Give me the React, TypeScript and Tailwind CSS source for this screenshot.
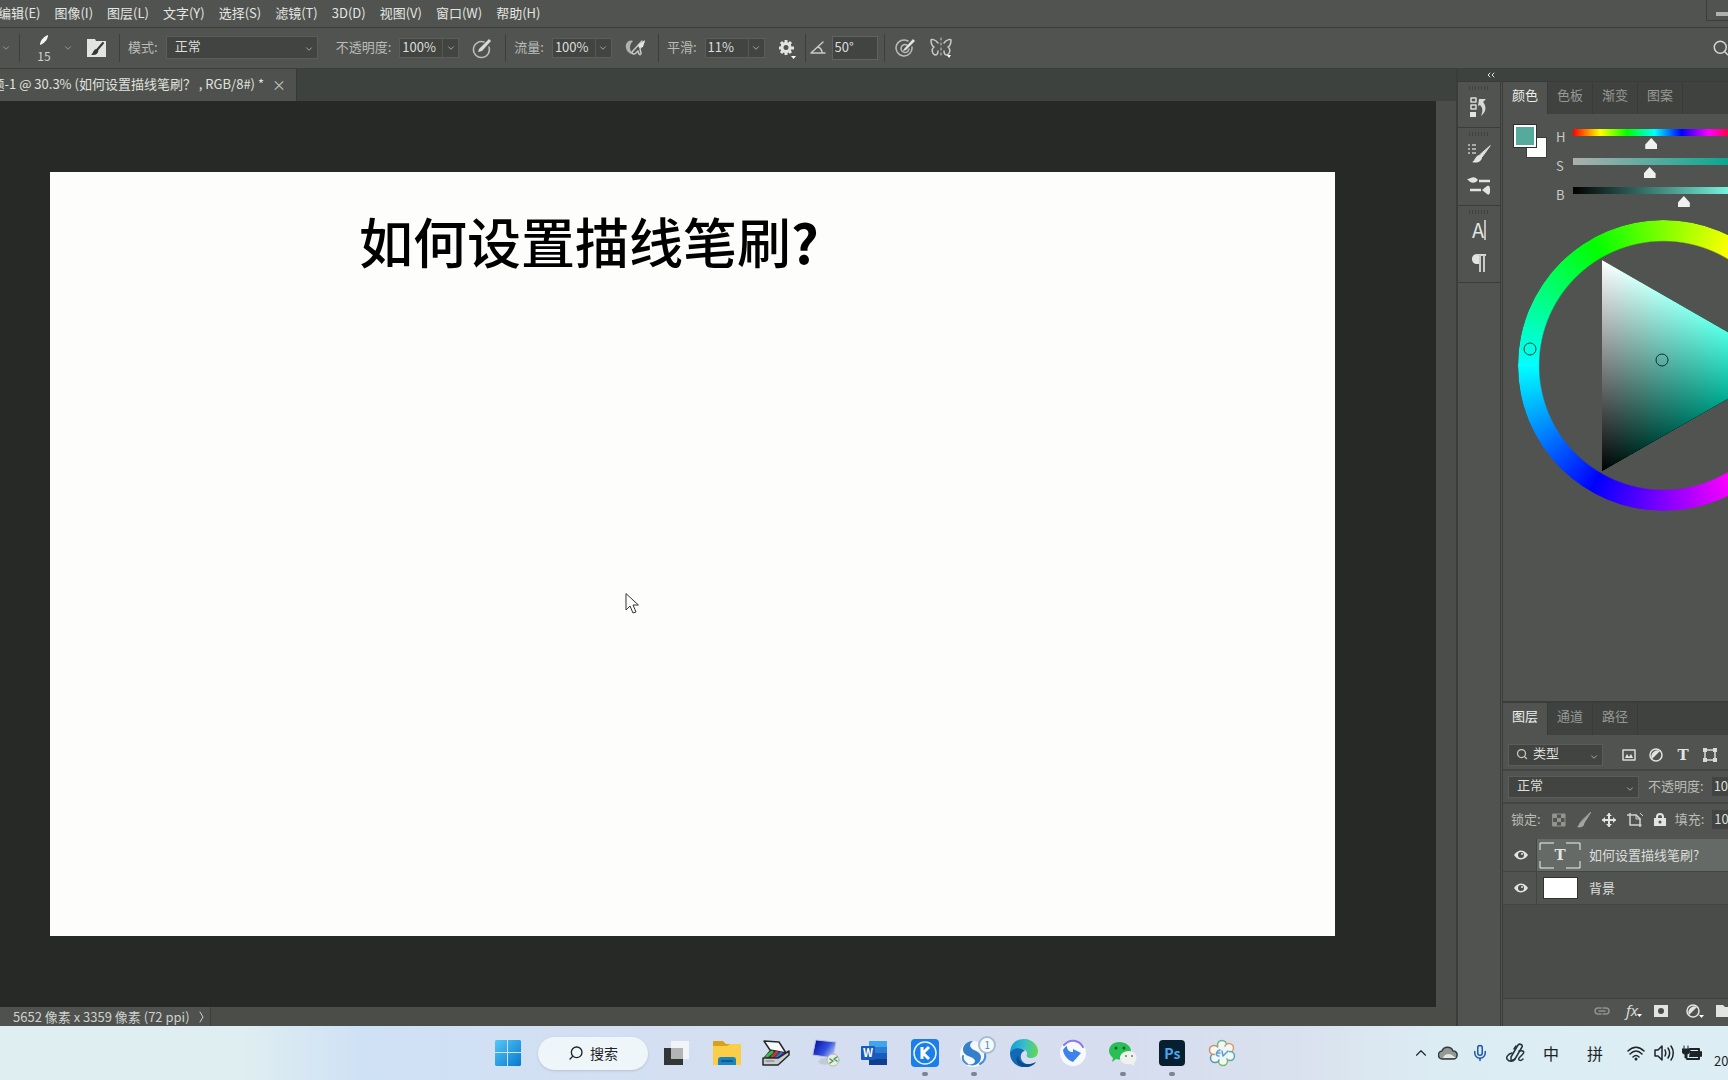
import type { ReactNode } from 'react';
import { ChevronDown, ChevronUp, Mic, Search } from 'lucide-react';

const MENUS = ['编辑(E)', '图像(I)', '图层(L)', '文字(Y)', '选择(S)', '滤镜(T)', '3D(D)', '视图(V)', '窗口(W)', '帮助(H)'];
const COLOR_TABS = ['颜色', '色板', '渐变', '图案'];
const LAYER_TABS = ['图层', '通道', '路径'];

type IconProps = {
  width: number;
  height: number;
  className?: string;
  children: ReactNode;
};

function Icon({ width, height, className = '', children }: IconProps) {
  return (
    <svg
      aria-hidden="true"
      width={width}
      height={height}
      viewBox={`0 0 ${width} ${height}`}
      className={`shrink-0 ${className}`}
      fill="none"
      strokeLinecap="round"
      strokeLinejoin="round"
    >
      {children}
    </svg>
  );
}

function Divider() {
  return <span className="h-7 w-px shrink-0 bg-[#3b3e3b]" />;
}

function Dropdown({ label, options, className }: { label: string; options: string[]; className: string }) {
  return (
    <div className={`relative shrink-0 ${className}`}>
      <select
        aria-label={label}
        className="block h-full w-full appearance-none border border-[#5a5d59] bg-[#414441] pb-1 pl-2 text-[13px] leading-4 text-[#dcdedb] outline-none"
      >
        {options.map((option) => (
          <option key={option}>{option}</option>
        ))}
      </select>
      <ChevronDown className="pointer-events-none absolute top-2 right-1 size-2.5 text-[#b4b7b3]" />
    </div>
  );
}

function ValueBox({ id, label, value, className }: { id: string; label: string; value: string; className: string }) {
  return (
    <div className="flex shrink-0 items-center gap-2">
      <label htmlFor={id} className="pb-0.5 text-[13px] leading-5 text-[#b9bcb8]">
        {label}
      </label>
      <div className={`flex h-5 border border-[#5a5d59] bg-[#414441] ${className}`}>
        <input id={id} defaultValue={value} className="w-0 min-w-0 flex-1 bg-transparent pb-0.5 pl-0.5 text-[13px] text-[#dcdedb] outline-none" />
        <button type="button" aria-label={`${label} slider`} className="flex w-4 items-center justify-center border-l border-[#555854]">
          <ChevronDown className="size-2.5 text-[#b4b7b3]" />
        </button>
      </div>
    </div>
  );
}

function IconButton({ label, className = '', children }: { label: string; className?: string; children: ReactNode }) {
  return (
    <button type="button" aria-label={label} title={label} className={`flex shrink-0 items-center justify-center ${className}`}>
      {children}
    </button>
  );
}

function OptionsBar() {
  return (
    <div className="flex h-[41px] shrink-0 items-center overflow-hidden border-b border-[#3b3e3b] bg-[#50534f] pb-px">
      <IconButton label="工具预设" className="w-[19px] pr-2">
        <ChevronDown className="size-2.5 text-[#a4a7a3]" />
      </IconButton>
      <Divider />
      <button type="button" className="ml-3 flex w-6 flex-col items-center text-[12px] leading-3 text-[#cfd1ce]">
        <Icon width={10} height={12}>
          <path d="M1 11C1 7 4 3 9 1 9 5 6 9 1 11Z" fill="#f5f6f4" />
        </Icon>
        <span className="mt-1">15</span>
      </button>
      <IconButton label="画笔预设" className="ml-1 w-4">
        <ChevronDown className="size-2.5 text-[#a4a7a3]" />
      </IconButton>
      <IconButton label="画笔设置" className="mr-3 ml-[11px]">
        <Icon width={20} height={20}>
          <path d="M0 1h8l1 2h10v16H0Z" fill="#e2e4e1" />
          <path d="M16 5 10 12" stroke="#333633" strokeWidth="2" />
          <path d="M9 11c2 0 3 2 2 3-1 3-4 3-7 3 2-1 2-5 5-6Z" fill="#333633" />
        </Icon>
      </IconButton>
      <Divider />
      <span className="ml-2 shrink-0 pb-0.5 text-[13px] leading-5 text-[#b9bcb8]">模式:</span>
      <Dropdown label="模式" options={['正常', '溶解', '正片叠底']} className="mr-[18px] ml-2 h-[23px] w-[152px]" />
      <ValueBox id="opacity" label="不透明度:" value="100%" className="w-[60px]" />
      <IconButton label="不透明度压力" className="mx-3">
        <Icon width={22} height={22}>
          <path d="M13 5A8 8 0 1 0 18 10" stroke="#b9bcb8" strokeWidth="1.5" />
          <path d="m8 12 10-10 2 2L11 14l-4 1Z" fill="#d8dad7" />
        </Icon>
      </IconButton>
      <Divider />
      <span className="w-2" />
      <ValueBox id="flow" label="流量:" value="100%" className="w-[60px]" />
      <IconButton label="喷枪" className="mx-3">
        <Icon width={22} height={22}>
          <path d="M9 4C4 2 1 7 2 11c1 4 4 6 7 6-4-4-4-9 0-13Z" fill="#aeb1ad" />
          <path d="M18 4 8 15c0 2 2 3 4 1l2-2 1 3c1 1 2 1 2-1l-1-4 4-7" stroke="#c8cac7" strokeWidth="1.5" />
          <path d="m21 3-7 5 1 3 4-1Z" fill="#e2e4e1" />
        </Icon>
      </IconButton>
      <Divider />
      <span className="w-2" />
      <ValueBox id="smooth" label="平滑:" value="11%" className="w-[60px]" />
      <IconButton label="平滑选项" className="mr-2 ml-3">
        <Icon width={20} height={22}>
          <g stroke="#e2e4e1" strokeWidth="3" strokeLinecap="butt">
            <path d="M9 3v15M2 11h15M4 5l10 11M14 5 4 16" />
          </g>
          <circle cx="9" cy="10.5" r="4" fill="#50534f" stroke="#e2e4e1" strokeWidth="3" />
          <path d="M14 19h5l-2.5 3Z" fill="#fff" />
        </Icon>
      </IconButton>
      <Divider />
      <div className="mr-1.5 ml-1 flex shrink-0 items-center gap-1.5">
        <label htmlFor="angle" aria-label="角度">
          <Icon width={16} height={14}>
            <path d="M13 1 1 12h14M8 6c3 1 4 3 4 6" stroke="#c8cac7" strokeWidth="1.5" />
          </Icon>
        </label>
        <input id="angle" defaultValue="50°" className="h-6 w-[46px] border border-[#5f625e] bg-[#414441] pb-0.5 pl-0.5 text-[13px] text-[#dcdedb] outline-none" />
      </div>
      <Divider />
      <IconButton label="大小压力" className="ml-2.5">
        <Icon width={22} height={22}>
          <path d="M13 4A8 8 0 1 0 17 10M12 8a4 4 0 1 0 2 4" stroke="#b9bcb8" strokeWidth="1.5" />
          <path d="m9 12 9-10 2 2-9 9-3 1Z" fill="#e2e4e1" />
        </Icon>
      </IconButton>
      <IconButton label="对称" className="ml-3">
        <Icon width={24} height={22}>
          <path
            d="M9 6C6 2 2 2 2 3c0 4 1 6 3 7-3 2-2 7 1 8 2 0 3-2 3-4M15 6c3-4 7-4 7-3 0 4-1 6-3 7 3 2 2 7-1 8-2 0-3-2-3-4"
            stroke="#c8cac7"
            strokeWidth="1.5"
          />
          <path d="M12 1v20" stroke="#c8cac7" strokeDasharray="2 3" />
          <path d="M18 18h4l-2 3Z" fill="#fff" />
        </Icon>
      </IconButton>
      <IconButton label="搜索" className="-mr-0.5 ml-auto">
        <Search className="size-[18px] text-[#d3d5d2]" />
      </IconButton>
    </div>
  );
}

function Document() {
  return (
    <section className="flex min-w-0 flex-1 flex-col">
      <div className="flex h-8 shrink-0 bg-[#3e423f]">
        <div className="flex w-[297px] items-center justify-end overflow-hidden border-r border-[#353835] bg-[#4e514d] pr-2.5 pb-0.5 text-[13px] whitespace-pre text-[#e0e2df]">
          <span>未标题-1 @ 30.3% (如何设置描线笔刷？ , RGB/8#) *</span>
          <button type="button" aria-label="关闭文档" className="ml-2 text-[14px] leading-4 text-[#c0c3bf]">
            ×
          </button>
        </div>
      </div>
      <div className="flex min-h-0 flex-1">
        <div className="min-w-0 flex-1 bg-[#272926] pt-[71px] pr-[101px] pb-[71px] pl-[50px]">
          <div className="relative h-full bg-[#fdfefc] pt-[30px] pl-[309px]">
            <h1 className="text-[54px] leading-[78px] font-medium whitespace-nowrap text-black">
              如何设置描线笔刷<span className="font-bold">?</span>
            </h1>
            <Icon width={14} height={22} className="absolute top-[421px] left-[575px]">
              <path d="M1 1v16l4-4 3 7 3-1-3-7h5Z" fill="#fff" stroke="#333" />
            </Icon>
          </div>
        </div>
        <div className="w-5 bg-[#4a4d4a]" />
      </div>
      <footer className="flex h-[19px] shrink-0 bg-[#4b4d49]">
        <div className="flex w-[211px] items-center justify-between border-r border-[#3b3e3b] bg-[#4e514d] pr-1.5 pl-[13px] text-[13px] leading-4 whitespace-nowrap text-[#cfd1ce]">
          <span>5652 像素 x 3359 像素 (72 ppi)</span>
          <Icon width={5} height={12}>
            <path d="m1 1 3 5-3 5" stroke="#cfd1ce" />
          </Icon>
        </div>
      </footer>
    </section>
  );
}

function Grip() {
  return <span className="mt-1 h-1 w-5 bg-[repeating-linear-gradient(90deg,#3f423f_0_1px,transparent_1px_3px)]" />;
}

function CollapsedDock() {
  return (
    <nav aria-label="折叠面板" className="flex w-[43px] shrink-0 flex-col border-r border-[#3a3d3a] bg-[#50534f]">
      <div className="flex h-[46px] flex-col items-center border-b border-[#3a3d3a]">
        <Grip />
        <IconButton label="历史记录" className="mt-1.5">
          <Icon width={20} height={22}>
            <path d="M2 2h5v4H2Zm0 7h5v4H2Z" stroke="#d8dad7" strokeWidth="1.5" />
            <path d="M1 16h6v5H1Z" fill="#e2e4e1" />
            <path d="M10 3h7l-3 3c4 5 3 10-2 14 2-5 2-8-1-11l-2 1Z" fill="#d8dad7" />
          </Icon>
        </IconButton>
      </div>
      <div className="flex h-[78px] flex-col items-center border-b border-[#3a3d3a]">
        <Grip />
        <IconButton label="画笔设置" className="mt-1.5">
          <Icon width={24} height={22}>
            <path d="M1 3h2M1 7h2M1 11h2M5 3h4M5 7h4M5 11h4" stroke="#c8cac7" strokeWidth="1.5" strokeLinecap="butt" />
            <path d="M23 4 15 15l-2-2Z" fill="#e2e4e1" stroke="#e2e4e1" />
            <path d="M12 13c3 0 4 3 2 5-2 3-6 3-9 2 3-1 3-6 7-7Z" fill="#e2e4e1" />
          </Icon>
        </IconButton>
        <IconButton label="画笔" className="mt-3">
          <Icon width={24} height={20}>
            <path d="M0 3c4 0 5-3 9-1l2 2-2 2C5 8 3 6 0 3Z" fill="#e2e4e1" />
            <path d="M12 5h11M3 14h11" stroke="#e2e4e1" strokeWidth="2.5" strokeLinecap="butt" />
            <path d="m15 14 5-4c3-1 3 2 3 4s0 6-3 4Z" fill="#e2e4e1" />
          </Icon>
        </IconButton>
      </div>
      <div className="flex h-[77px] flex-col items-center border-b border-[#3a3d3a] text-[#e2e4e1]">
        <Grip />
        <button type="button" aria-label="字符" className="mt-1.5 flex h-5 items-center border-r-2 border-[#b9bcb8] text-[20px] leading-5">
          A
        </button>
        <IconButton label="段落" className="mt-3.5">
          <Icon width={14} height={18}>
            <path d="M7 0H5C2 0 0 2 0 5s2 5 5 5h2Z" fill="#e2e4e1" />
            <path d="M5 1h9" stroke="#d8dad7" strokeWidth="2" strokeLinecap="butt" />
            <path d="M8 1v17M12 1v17" stroke="#c8cac7" strokeWidth="2" strokeLinecap="butt" />
          </Icon>
        </IconButton>
      </div>
    </nav>
  );
}

function Tabs({ items, label }: { items: string[]; label: string }) {
  return (
    <div role="tablist" aria-label={label} className="flex h-8 shrink-0 bg-[#3f423f]">
      {items.map((item, index) => (
        <button
          key={item}
          type="button"
          role="tab"
          aria-selected={index === 0}
          className={`w-[45px] border-r border-[#383b38] pb-1.5 text-[13px] ${index === 0 ? 'bg-[#50534f] text-[#eceeeb]' : 'text-[#969995]'}`}
        >
          {item}
        </button>
      ))}
    </div>
  );
}

function ColorSlider({ label, value, track }: { label: string; value: number; track: string }) {
  return (
    <div className="flex h-[29px] items-start">
      <label htmlFor={`slider-${label}`} className="w-[17px] shrink-0 text-[13px] leading-4 text-[#c8cac7]">
        {label}
      </label>
      <div className="w-[163px] shrink-0">
        <div className={`h-[7px] ${track}`} />
        <input
          id={`slider-${label}`}
          type="range"
          defaultValue={value}
          className="mt-0.5 -ml-1.5 block h-[11px] w-[175px] appearance-none bg-transparent [&::-webkit-slider-thumb]:h-[11px] [&::-webkit-slider-thumb]:w-3 [&::-webkit-slider-thumb]:appearance-none [&::-webkit-slider-thumb]:bg-[#f0f1ef] [&::-webkit-slider-thumb]:[clip-path:polygon(50%_0,100%_60%,100%_100%,0_100%,0_60%)]"
        />
      </div>
    </div>
  );
}

function ColorWheel() {
  return (
    <div className="relative mt-1 ml-[15px] size-[291px]">
      <div className="size-full rounded-full bg-[conic-gradient(from_90deg,#f00,#f0f,#00f,#0ff,#0f0,#ff0,#f00)] [mask:radial-gradient(closest-side,transparent_85%,black_86%)]" />
      <svg aria-hidden="true" viewBox="0 0 291 291" className="absolute inset-0 isolate size-full">
        <defs>
          <linearGradient id="hue" gradientUnits="userSpaceOnUse" x1="84" y1="0" x2="268" y2="0">
            <stop offset="0" stopColor="#000" />
            <stop offset="1" stopColor="#00ffd8" />
          </linearGradient>
          <linearGradient id="white" gradientUnits="userSpaceOnUse" x1="84" y1="40" x2="176" y2="198">
            <stop offset="0" stopColor="#fff" />
            <stop offset="1" stopColor="#000" />
          </linearGradient>
        </defs>
        <path d="M84 40v211l184-105.5Z" fill="url(#hue)" />
        <path d="M84 40v211l184-105.5Z" fill="url(#white)" className="mix-blend-plus-lighter" />
        <circle cx="12" cy="129" r="6" fill="none" stroke="#0b3f3a" />
        <circle cx="144" cy="140" r="6" fill="none" stroke="#0f2f2a" />
      </svg>
    </div>
  );
}

function ColorPanel() {
  return (
    <section className="flex min-h-0 flex-1 flex-col overflow-hidden bg-[#50534f]">
      <Tabs items={COLOR_TABS} label="颜色面板" />
      <div className="mt-[15px] flex pl-[11px]">
        <div className="relative h-[35px] w-[42px] shrink-0">
          <button type="button" aria-label="背景色" className="absolute top-2 left-3 size-[21px] border border-[#3b3e3b] bg-[#fdfefc]" />
          <button type="button" aria-label="前景色" className="absolute -top-1 left-0 size-[22px] border-2 border-white bg-[#55ab9b] outline outline-[#2e312e]" />
        </div>
        <div className="shrink-0">
          <ColorSlider label="H" value={48} track="bg-[linear-gradient(90deg,#f00,#ff0,#0f0,#0ff,#00f,#f0f,#f00)]" />
          <ColorSlider label="S" value={47} track="bg-[linear-gradient(90deg,#adafac,#00a890)]" />
          <ColorSlider label="B" value={68} track="bg-[linear-gradient(90deg,#000,#7dffe9)]" />
        </div>
      </div>
      <ColorWheel />
    </section>
  );
}

function Eye() {
  return (
    <Icon width={14} height={10}>
      <path d="M0 5c4-6 10-6 14 0-4 6-10 6-14 0Z" fill="#e2e4e1" />
      <circle cx="7" cy="5" r="3" fill="#4a4d4a" />
      <circle cx="8" cy="4" r="1" fill="#e2e4e1" />
    </Icon>
  );
}

function Glyph({ children }: { children: string }) {
  return <span className="font-['DejaVu_Serif',serif] text-[15px] leading-5 font-bold text-[#e2e4e1]">{children}</span>;
}

function HalfCircle() {
  return (
    <Icon width={14} height={14}>
      <circle cx="7" cy="7" r="6" stroke="#e2e4e1" strokeWidth="1.5" />
      <path d="M11 3A6 6 0 0 0 3 11Z" fill="#e2e4e1" />
    </Icon>
  );
}

function MenuMark() {
  return (
    <Icon width={5} height={3} className="-mb-3 -ml-px">
      <path d="M0 0h5L2.5 3Z" fill="#fff" />
    </Icon>
  );
}

function LayersPanel() {
  return (
    <section className="flex h-[325px] shrink-0 flex-col border-t-2 border-[#3a3d3a] bg-[#50534f] whitespace-nowrap">
      <Tabs items={LAYER_TABS} label="图层面板" />
      <div className="flex h-9 shrink-0 items-center border-b-2 border-[#434642] pt-1.5 pl-[5px]">
        <div className="relative h-[22px] w-[95px] shrink-0">
          <select
            aria-label="筛选"
            className="block h-full w-full appearance-none border border-[#5a5d59] bg-[#414441] pb-1 pl-6 text-[13px] leading-4 text-[#dcdedb] outline-none"
          >
            <option>类型</option>
          </select>
          <Search strokeWidth={2.5} className="pointer-events-none absolute top-1 left-2 size-3 text-[#c8cac7]" />
          <ChevronDown className="pointer-events-none absolute top-2 right-1 size-2.5 text-[#b4b7b3]" />
        </div>
        <div className="ml-[19px] flex gap-[13px]">
          <IconButton label="像素图层" className="w-[14px]">
            <Icon width={14} height={12}>
              <path d="M1 1h12v10H1Z" stroke="#d8dad7" strokeWidth="1.5" />
              <path d="m3 9 2-4 2 3 2-3 2 4Z" fill="#e2e4e1" />
            </Icon>
          </IconButton>
          <IconButton label="调整图层" className="w-[14px]">
            <HalfCircle />
          </IconButton>
          <IconButton label="文字图层" className="w-[14px]">
            <Glyph>T</Glyph>
          </IconButton>
          <IconButton label="形状图层" className="w-[14px]">
            <Icon width={14} height={14}>
              <path d="M2 2h10v10H2Z" stroke="#d8dad7" strokeWidth="1.5" />
              <path d="M0 0h4v4H0ZM10 0h4v4h-4ZM0 10h4v4H0ZM10 10h4v4h-4Z" fill="#d8dad7" />
            </Icon>
          </IconButton>
        </div>
      </div>
      <div className="flex h-[33px] shrink-0 items-center border-b-2 border-[#434642] pl-[5px]">
        <Dropdown label="混合模式" options={['正常', '溶解']} className="h-[22px] w-[131px]" />
        <label htmlFor="layer-opacity" className="mr-2 ml-[9px] shrink-0 pb-0.5 text-[13px] leading-5 text-[#b9bcb8]">
          不透明度:
        </label>
        <input id="layer-opacity" defaultValue="100%" className="h-[19px] w-11 shrink-0 bg-[#414441] pb-0.5 pl-0.5 text-[13px] text-[#dcdedb] outline-none" />
      </div>
      <div className="flex h-[35px] shrink-0 items-center pb-1 pl-2">
        <span className="shrink-0 pb-0.5 text-[13px] leading-5 text-[#b9bcb8]">锁定:</span>
        <div className="ml-[11px] flex items-center gap-[11px]">
          <IconButton label="锁定透明像素">
            <Icon width={14} height={14}>
              <path d="M1 1h12v12H1Z" stroke="#92958f" />
              <path d="M1 1h4v4H1Zm8 0h4v4H9ZM5 5h4v4H5ZM1 9h4v4H1Zm8 0h4v4H9Z" fill="#92958f" />
            </Icon>
          </IconButton>
          <IconButton label="锁定图像像素">
            <Icon width={14} height={16}>
              <path d="M14 0 7 11 5 9Z" fill="#a2a5a1" stroke="#a2a5a1" />
              <path d="M5 9c2 0 3 2 2 4s-4 3-7 2c2-1 2-5 5-6Z" fill="#a2a5a1" />
            </Icon>
          </IconButton>
          <IconButton label="锁定位置">
            <Icon width={14} height={14}>
              <path d="M7 1v12M1 7h12" stroke="#e2e4e1" strokeWidth="2" />
              <path d="m7 0 3 3H4ZM7 14l3-3H4ZM0 7l3-3v6ZM14 7l-3-3v6Z" fill="#e2e4e1" />
            </Icon>
          </IconButton>
          <IconButton label="防止自动嵌套">
            <Icon width={16} height={14}>
              <path d="M0 2h9l4 4v8M3 0v12h11" stroke="#d0d2cf" strokeWidth="1.5" />
              <path d="M9 2v4h4ZM13 0l3 3" stroke="#d0d2cf" />
            </Icon>
          </IconButton>
          <IconButton label="全部锁定">
            <Icon width={12} height={14}>
              <path d="M3 6V4c0-4 6-4 6 0v2" stroke="#e2e4e1" strokeWidth="2" />
              <path d="M0 5h12v8H0Z" fill="#e2e4e1" />
              <circle cx="6" cy="9" r="1.5" fill="#50534f" />
            </Icon>
          </IconButton>
        </div>
        <label htmlFor="layer-fill" className="mr-2 ml-[9px] shrink-0 pb-0.5 text-[13px] leading-5 text-[#b9bcb8]">
          填充:
        </label>
        <input id="layer-fill" defaultValue="100%" className="h-[19px] w-11 shrink-0 bg-[#414441] pb-0.5 pl-0.5 text-[13px] text-[#dcdedb] outline-none" />
      </div>
      <ul className="min-h-0 flex-1 bg-[#4a4c49] text-[13px] text-[#dcdedb]">
        <li className="flex h-[33px] border-b border-[#424542] bg-[#50534f]">
          <IconButton label="显示文字图层" className="w-[34px] border-r border-[#424542] pl-0.5">
            <Eye />
          </IconButton>
          <div className="flex flex-1 items-center bg-[#656a66] pl-0.5">
            <span className="relative flex h-[27px] w-[42px] items-center justify-center">
              <Icon width={42} height={27} className="absolute inset-0">
                <path d="M1 8V1h14M27 1h14v7M41 19v7H27M15 26H1v-7" stroke="#f0f1ef" strokeLinecap="butt" />
              </Icon>
              <Glyph>T</Glyph>
            </span>
            <span className="ml-2">如何设置描线笔刷?</span>
          </div>
        </li>
        <li className="flex h-[33px] border-b border-[#424542] bg-[#50534f]">
          <IconButton label="显示背景图层" className="w-[34px] border-r border-[#424542] pl-0.5">
            <Eye />
          </IconButton>
          <div className="flex flex-1 items-center pl-1.5">
            <span className="h-[22px] w-[35px] border border-[#30332f] bg-white" />
            <span className="ml-[11px]">背景</span>
          </div>
        </li>
      </ul>
      <div className="flex h-7 shrink-0 items-center border-t border-[#3b3e3b] pb-1 pl-[91px]">
        <IconButton label="链接图层" className="mr-4">
          <Icon width={16} height={10}>
            <path d="M7 2H4a3 3 0 0 0 0 6h3M9 2h3a3 3 0 0 1 0 6H9M5 5h6" stroke="#8f928e" strokeWidth="1.5" />
          </Icon>
        </IconButton>
        <button
          type="button"
          aria-label="图层样式"
          className="mr-3 flex items-center pb-0.5 font-['Noto_Sans',sans-serif] text-[15px] leading-5 text-[#d8dad7] italic"
        >
          fx
          <MenuMark />
        </button>
        <IconButton label="添加蒙版" className="mr-[18px]">
          <Icon width={14} height={12}>
            <path d="M0 0h14v12H0Z" fill="#e2e4e1" />
            <circle cx="7" cy="6" r="3" fill="#4a4d4a" />
          </Icon>
        </IconButton>
        <IconButton label="新建调整图层" className="mr-3">
          <HalfCircle />
          <MenuMark />
        </IconButton>
        <IconButton label="新建组">
          <Icon width={16} height={12}>
            <path d="M0 0h7l2 2h7v10H0Z" fill="#e2e4e1" />
          </Icon>
        </IconButton>
      </div>
    </section>
  );
}

function TaskApp({ label, running = false, children }: { label: string; running?: boolean; children: ReactNode }) {
  return (
    <button type="button" aria-label={label} title={label} className="relative flex h-full w-8 items-center justify-center">
      {children}
      {running ? <span className="absolute bottom-1 h-1 w-1.5 rounded-full bg-[#7d8491]" /> : null}
    </button>
  );
}

function Taskbar() {
  return (
    <footer className="grid h-[54px] shrink-0 grid-cols-[1fr_auto_1fr] bg-[linear-gradient(90deg,#dfeef1_0%,#dfeef1_14%,#cfe1f5_21%,#d3dff2_35%,#d6ddef_65%,#d9e1ee_75%,#dcecf3_83%,#dceef3_100%)] text-[#1d2428]">
      <span />
      <div className="flex items-center pl-0.5">
        <TaskApp label="开始">
          <Icon width={26} height={26}>
            <defs>
              <linearGradient id="win" x1="0" y1="0" x2="26" y2="26" gradientUnits="userSpaceOnUse">
                <stop stopColor="#54c8f5" />
                <stop offset="1" stopColor="#0878d0" />
              </linearGradient>
            </defs>
            <path d="M1 0h11v12H0V1ZM13 0h12l1 1v11H13ZM0 13h12v13H1l-1-1ZM13 13h13v12l-1 1H13Z" fill="url(#win)" />
          </Icon>
        </TaskApp>
        <button type="button" className="mr-[13px] ml-3.5 flex h-[33px] w-[110px] items-center justify-center gap-1.5 rounded-full bg-[#eff6f9] text-[14px] shadow-sm">
          <Search className="size-4 -scale-x-100" />
          搜索
        </button>
        <div className="flex h-full w-[577px] items-center justify-between">
          <TaskApp label="任务视图">
            <Icon width={28} height={28}>
              <path d="M8 2h18v18H8Z" fill="#f2f5f5" />
              <path d="M1 9h19v17H1Z" fill="#343635" />
              <path d="M8 9h12v11H8Z" fill="#b2b5b5" />
            </Icon>
          </TaskApp>
          <TaskApp label="文件资源管理器">
            <Icon width={28} height={26}>
              <path d="M0 1h10l3 3h14v6H0Z" fill="#d9a01c" />
              <path d="M0 6h14l3-2h11v21H0Z" fill="#fbce47" />
              <path d="M5 25v-5c0-2 1-3 3-3h12c2 0 3 1 3 3v5Z" fill="#1c83bd" />
              <path d="M9 21h10" stroke="#0c5d93" strokeWidth="2" />
            </Icon>
          </TaskApp>
          <TaskApp label="扫描仪">
            <Icon width={28} height={28}>
              <path d="m2 2 15 1 7 11-16-3Z" fill="#f7f8f8" stroke="#26292b" strokeWidth="1.5" />
              <path d="m2 18 6-7 17 3-8 8Z" fill="#25313a" />
              <path d="m5 17 5-4" stroke="#3bb54a" strokeWidth="3" />
              <path d="m10 18 5-5" stroke="#c0392b" strokeWidth="3" />
              <path d="m14 19 5-5" stroke="#3768d6" strokeWidth="3" />
              <path d="m18 19 3-4" stroke="#9b3fb5" strokeWidth="2" />
              <path d="M1 19h15l11-7v4L16 26H1Z" fill="#c9cdce" stroke="#26292b" strokeWidth="1.5" />
              <path d="M4 22h8" stroke="#777" />
            </Icon>
          </TaskApp>
          <TaskApp label="远程桌面">
            <Icon width={28} height={28}>
              <defs>
                <linearGradient id="screen" x1="3" y1="3" x2="24" y2="18" gradientUnits="userSpaceOnUse">
                  <stop stopColor="#0a16a8" />
                  <stop offset=".5" stopColor="#3450dd" />
                  <stop offset="1" stopColor="#dbe8fb" />
                </linearGradient>
              </defs>
              <path d="M9 19h7l2 5c-4 3-9 2-12-1Z" fill="#c3ccd6" />
              <path d="m4 1 20 2-3 16-20-3Z" fill="url(#screen)" stroke="#b7c2d6" />
              <circle cx="21" cy="21" r="6" fill="#e8ece8" stroke="#b4bab5" />
              <path d="m18 20 3 2-3 2M25 18l-3 2 3 2" stroke="#3e9447" strokeWidth="1.5" />
            </Icon>
          </TaskApp>
          <TaskApp label="Word">
            <Icon width={28} height={26}>
              <path d="M8 1h18v6H8Z" fill="#41a5ee" />
              <path d="M8 7h18v6H8Z" fill="#2b7cd3" />
              <path d="M8 13h18v6H8Z" fill="#185abd" />
              <path d="M8 19h18v6H8Z" fill="#103f91" />
              <rect y="6" width="14" height="14" rx="1" fill="#185abd" />
              <text x="7" y="17" textAnchor="middle" fontSize="11" fontWeight="700" fill="#fff">
                W
              </text>
            </Icon>
          </TaskApp>
          <TaskApp label="酷狗" running>
            <Icon width={28} height={28}>
              <rect width="28" height="28" rx="4" fill="#1b7fea" />
              <circle cx="14" cy="14" r="11" stroke="#e5f3ff" strokeWidth="1.5" />
              <path d="M11 8v12M18 8l-6 6 6 6" stroke="#fff" strokeWidth="3" strokeLinecap="butt" />
            </Icon>
          </TaskApp>
          <TaskApp label="搜狗" running>
            <Icon width={28} height={28}>
              <circle cx="13" cy="15" r="13" fill="#f5f9fc" />
              <path d="M13 2C5 2 1 9 4 14c3 4 11 4 11 8 0 3-4 4-8 3 5 3 11 1 13-3 3-6-1-9-6-11-5-3-5-6-1-9Z" fill="#3580cd" />
              <path d="M3 17c-1 3 1 6 4 8M25 14c1 5-1 9-5 11" stroke="#4a8ed2" strokeWidth="2" />
            </Icon>
            <span className="absolute top-2.5 -right-1.5 flex size-[18px] items-center justify-center rounded-full border-2 border-[#a5bed1] bg-[#f5faff] text-[10px] leading-3 text-[#5683b5]">
              1
            </span>
          </TaskApp>
          <TaskApp label="Edge">
            <Icon width={28} height={28}>
              <defs>
                <linearGradient id="edge" x1="0" y1="8" x2="28" y2="12" gradientUnits="userSpaceOnUse">
                  <stop stopColor="#159bd7" />
                  <stop offset=".5" stopColor="#36bfc8" />
                  <stop offset="1" stopColor="#68d84b" />
                </linearGradient>
              </defs>
              <path d="M0 15C0 5 6 0 14 0c9 0 14 7 14 12 0 5-3 7-7 7-4 0-5-2-4-4 1-6-11-8-17 0Z" fill="url(#edge)" />
              <path d="M0 14C3 8 12 8 15 12c-4 0-6 7-2 11 3 3 8 3 13 0-3 4-8 5-12 5C6 28 0 22 0 14Z" fill="#1269b5" />
              <path d="M8 16c0 8 8 12 18 7-4 6-13 7-18 2-2-3-2-6 0-9Z" fill="#0c4c8f" />
            </Icon>
          </TaskApp>
          <TaskApp label="飞鸟">
            <Icon width={28} height={28}>
              <circle cx="14" cy="14" r="13" fill="#f6f9fe" />
              <path d="M5 6c6-7 15-5 19 2" stroke="#8a78e8" strokeWidth="2" />
              <path d="M4 11c1 6 5 10 10 12l8-9-8-4v3c-4 0-6-2-6-6-2 1-3 2-4 4Z" fill="#3e82ec" />
            </Icon>
          </TaskApp>
          <TaskApp label="微信" running>
            <Icon width={28} height={28}>
              <path d="M10 3C4 3 0 7 0 12c0 3 2 5 4 7l-1 4 4-3c9 2 15-2 15-8 0-5-5-9-12-9Z" fill="#29bf55" />
              <circle cx="7" cy="9" r="1.5" fill="#17602c" />
              <circle cx="15" cy="9" r="1.5" fill="#17602c" />
              <path d="M20 12c-5 0-9 3-9 7s5 7 11 6l3 2v-3c5-5 2-12-5-12Z" fill="#f0f2ee" />
              <circle cx="17" cy="17" r="1" fill="#777" />
              <circle cx="23" cy="17" r="1" fill="#777" />
            </Icon>
          </TaskApp>
          <TaskApp label="Photoshop" running>
            <span className="flex size-[26px] items-center justify-center rounded bg-[#06202f] text-[14px] leading-4 font-bold text-[#4aa8f2]">Ps</span>
          </TaskApp>
          <TaskApp label="EV 录屏">
            <Icon width={28} height={28}>
              <g fill="#f4f8f4" strokeWidth="1.5">
                <circle cx="14" cy="6" r="4.5" stroke="#63b58a" />
                <circle cx="21" cy="9" r="4.5" stroke="#d79a68" />
                <circle cx="22" cy="17" r="4.5" stroke="#58a7a5" />
                <circle cx="15" cy="22" r="4.5" stroke="#7eb868" />
                <circle cx="7" cy="19" r="4.5" stroke="#4e9cb7" />
                <circle cx="6" cy="11" r="4.5" stroke="#d48b62" />
              </g>
              <circle cx="14" cy="14" r="7" fill="#edf5f8" />
              <path d="M12 11c-4 1-5 6-1 6M9 14h3M14 12l1 5 5-5" stroke="#5c9fd0" strokeWidth="1.5" />
            </Icon>
          </TaskApp>
        </div>
      </div>
      <div className="flex items-center justify-end text-[16px]">
        <IconButton label="显示隐藏图标" className="w-[26px]">
          <ChevronUp className="size-[18px]" strokeWidth={1.5} />
        </IconButton>
        <IconButton label="OneDrive" className="w-7">
          <Icon width={20} height={14}>
            <path d="M5 13a4 4 0 0 1-1-8c2-5 9-5 11 0 6 0 5 8 0 8Z" fill="#929a96" stroke="#343b3a" strokeWidth="1.5" />
            <path d="M5 12c1-4 6-5 9-3l4 3Z" fill="#e2e6e2" />
          </Icon>
        </IconButton>
        <IconButton label="麦克风" className="w-9">
          <Mic className="size-[18px] text-[#1e55b5]" />
        </IconButton>
        <IconButton label="手写笔" className="w-9">
          <Icon width={20} height={20}>
            <path d="m5 14 7-12c2-2 5 0 4 2L9 16l-4 2Z" stroke="#26343a" strokeWidth="1.5" />
            <path d="M6 10c-4 1-6 4-5 6 2 3 6 3 8 0M13 8c5-1 6 1 3 4l-3 3c-1 3 2 3 4 1M10 3 8 6" stroke="#26343a" strokeWidth="1.5" />
          </Icon>
        </IconButton>
        <button type="button" className="w-[34px] shrink-0">
          中
        </button>
        <button type="button" className="w-[54px] shrink-0">
          拼
        </button>
        <IconButton label="网络" className="w-7">
          <Icon width={18} height={16}>
            <path d="M1 6c5-5 11-5 16 0M3 9c4-4 8-4 12 0M6 12c2-2 4-2 6 0" stroke="#1d2428" strokeWidth="1.5" />
            <circle cx="9" cy="14" r="1.5" fill="#1d2428" />
          </Icon>
        </IconButton>
        <IconButton label="音量" className="w-7">
          <Icon width={20} height={16}>
            <path d="M1 5h3l4-4v14l-4-4H1ZM11 5c1 2 1 4 0 6M14 3c2 3 2 7 0 10M17 1c3 4 3 10 0 14" stroke="#1d2428" strokeWidth="1.5" />
          </Icon>
        </IconButton>
        <IconButton label="电池" className="w-7">
          <Icon width={20} height={16}>
            <path d="M2 1v4M6 1v4M0 4h8v2c0 2-2 3-3 3v4H3V9C1 9 0 8 0 6Z" fill="#1d2428" stroke="#1d2428" />
            <path d="M8 4h9v10H5M19 7v4" stroke="#1d2428" strokeWidth="2" />
            <path d="M8 6h8v6H7Z" fill="#1d2428" />
          </Icon>
        </IconButton>
        <span className="ml-2 w-3.5 shrink-0 pt-4 text-[13px] leading-4">20</span>
      </div>
    </footer>
  );
}

export default function App() {
  return (
    <div className="flex h-screen w-full flex-col overflow-hidden bg-[#50534f] font-['Noto_Sans_CJK_SC','Noto_Sans',sans-serif]">
      <header className="flex h-7 shrink-0 border-b border-[#3b3e3b]">
        <nav className="-ml-0.5 flex items-center gap-3.5 pb-px text-[13px] whitespace-nowrap text-[#e4e6e3]">
          {MENUS.map((menu) => (
            <button key={menu} type="button">
              {menu}
            </button>
          ))}
        </nav>
        <button type="button" aria-label="最小化" className="ml-auto flex h-[21px] w-[22px] items-end border-b border-l border-[#3b3e3b] pb-1 pl-[9px]">
          <span className="h-1 w-full bg-[#aeb1ad]" />
        </button>
      </header>
      <OptionsBar />
      <main className="flex min-h-0 flex-1">
        <Document />
        <div className="flex shrink-0 flex-col border-l-2 border-[#3a3d3a]">
          <div className="flex h-[13px] shrink-0 items-center border-b border-[#383b38] bg-[#3e423f] pl-[29px]">
            <IconButton label="展开面板">
              <Icon width={8} height={6}>
                <path d="M3 1 1 3l2 2M7 1 5 3l2 2" stroke="#e2e4e1" />
              </Icon>
            </IconButton>
          </div>
          <div className="flex min-h-0 flex-1">
            <CollapsedDock />
            <aside className="ml-px flex w-[226px] flex-col overflow-hidden border-l border-[#3a3d3a]">
              <ColorPanel />
              <LayersPanel />
            </aside>
          </div>
        </div>
      </main>
      <Taskbar />
    </div>
  );
}
